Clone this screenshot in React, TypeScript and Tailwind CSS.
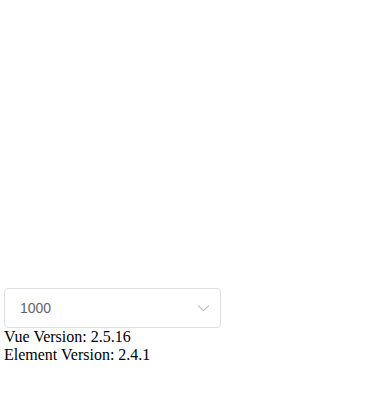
import React from "react";

export default function App() {
  return (
    <div className="min-h-[400px] bg-white pl-[4px] pt-[288px]" style={{ fontFamily: '"Liberation Serif", serif' }}>
      <div className="relative h-[40px] w-[217px] rounded-[4px] border border-[#dcdfe6] bg-white">
        <div
          className="flex h-full items-center pl-[15px] text-[14px] text-[#606266]"
          style={{ fontFamily: '"Liberation Sans", Arial, sans-serif' }}
        >
          1000
        </div>
        <svg
          className="absolute right-[10px] top-[15px]"
          width="13"
          height="8"
          viewBox="0 0 13 8"
          fill="none"
        >
          <path d="M1 1.5 L6.5 6.5 L12 1.5" stroke="#c0c4cc" strokeWidth="1.1" />
        </svg>
      </div>
      <div className="text-[16px] leading-[18px] text-black">Vue Version: 2.5.16</div>
      <div className="text-[16px] leading-[18px] text-black">Element Version: 2.4.1</div>
    </div>
  );
}
